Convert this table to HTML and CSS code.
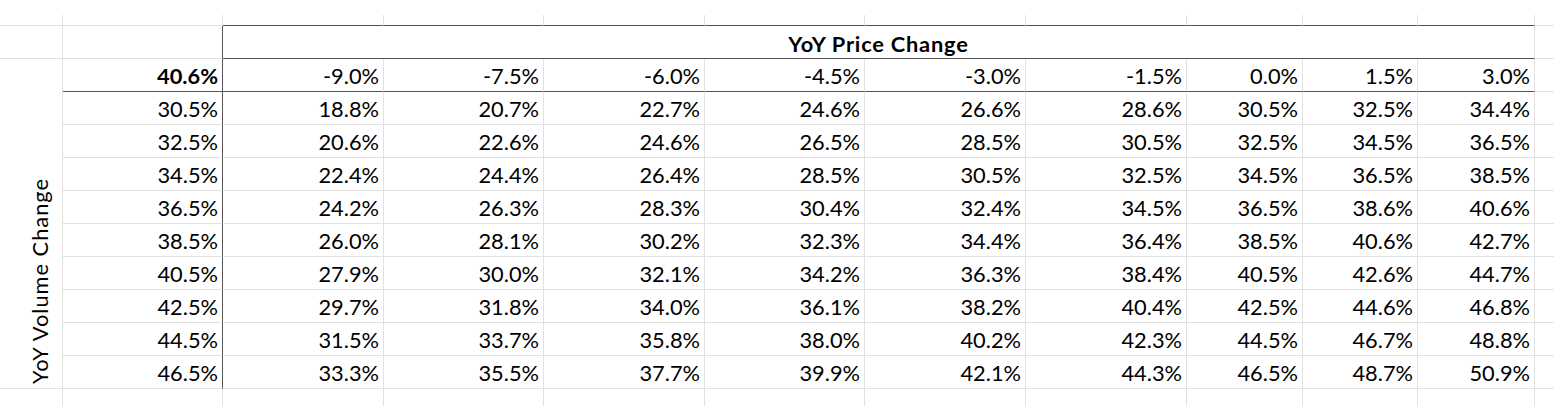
FILE: index.html
```html
<!DOCTYPE html>
<html lang="en">
<head>
<meta charset="utf-8">
<title>Sensitivity table</title>
<link rel="stylesheet" href="styles.css">
</head>
<body>
<div class="sheet">
  <!-- row 1 -->
  <div class="c"></div><div class="c"></div>
  <div class="c dkb"></div><div class="c dkb"></div><div class="c dkb"></div><div class="c dkb"></div><div class="c dkb"></div><div class="c dkb"></div><div class="c dkb"></div><div class="c dkb"></div><div class="c dkb"></div>
  <div class="c nr"></div>
  <!-- row 2 -->
  <div class="c"></div><div class="c dkr"></div>
  <div class="c dkb head">YoY Price Change</div>
  <div class="c nr"></div>
  <!-- row 3 -->
  <div class="c nb"></div>
  <div class="c dkr dkb num bold">40.6%</div>
  <div class="c dkb num">-9.0%</div><div class="c dkb num">-7.5%</div><div class="c dkb num">-6.0%</div><div class="c dkb num">-4.5%</div><div class="c dkb num">-3.0%</div><div class="c dkb num">-1.5%</div><div class="c dkb num">0.0%</div><div class="c dkb num">1.5%</div><div class="c dkb num">3.0%</div>
  <div class="c nr"></div>
  <!-- row 4 -->
  <div class="c vcell"><span class="vlabel">YoY Volume Change</span></div>
  <div class="c dkr num">30.5%</div>
  <div class="c num">18.8%</div><div class="c num">20.7%</div><div class="c num">22.7%</div><div class="c num">24.6%</div><div class="c num">26.6%</div><div class="c num">28.6%</div><div class="c num">30.5%</div><div class="c num">32.5%</div><div class="c num">34.4%</div>
  <div class="c nr"></div>
  <!-- row 5 -->
  <div class="c dkr num">32.5%</div>
  <div class="c num">20.6%</div><div class="c num">22.6%</div><div class="c num">24.6%</div><div class="c num">26.5%</div><div class="c num">28.5%</div><div class="c num">30.5%</div><div class="c num">32.5%</div><div class="c num">34.5%</div><div class="c num">36.5%</div>
  <div class="c nr"></div>
  <!-- row 6 -->
  <div class="c dkr num">34.5%</div>
  <div class="c num">22.4%</div><div class="c num">24.4%</div><div class="c num">26.4%</div><div class="c num">28.5%</div><div class="c num">30.5%</div><div class="c num">32.5%</div><div class="c num">34.5%</div><div class="c num">36.5%</div><div class="c num">38.5%</div>
  <div class="c nr"></div>
  <!-- row 7 -->
  <div class="c dkr num">36.5%</div>
  <div class="c num">24.2%</div><div class="c num">26.3%</div><div class="c num">28.3%</div><div class="c num">30.4%</div><div class="c num">32.4%</div><div class="c num">34.5%</div><div class="c num">36.5%</div><div class="c num">38.6%</div><div class="c num">40.6%</div>
  <div class="c nr"></div>
  <!-- row 8 -->
  <div class="c dkr num">38.5%</div>
  <div class="c num">26.0%</div><div class="c num">28.1%</div><div class="c num">30.2%</div><div class="c num">32.3%</div><div class="c num">34.4%</div><div class="c num">36.4%</div><div class="c num">38.5%</div><div class="c num">40.6%</div><div class="c num">42.7%</div>
  <div class="c nr"></div>
  <!-- row 9 -->
  <div class="c dkr num">40.5%</div>
  <div class="c num">27.9%</div><div class="c num">30.0%</div><div class="c num">32.1%</div><div class="c num">34.2%</div><div class="c num">36.3%</div><div class="c num">38.4%</div><div class="c num">40.5%</div><div class="c num">42.6%</div><div class="c num">44.7%</div>
  <div class="c nr"></div>
  <!-- row 10 -->
  <div class="c dkr num">42.5%</div>
  <div class="c num">29.7%</div><div class="c num">31.8%</div><div class="c num">34.0%</div><div class="c num">36.1%</div><div class="c num">38.2%</div><div class="c num">40.4%</div><div class="c num">42.5%</div><div class="c num">44.6%</div><div class="c num">46.8%</div>
  <div class="c nr"></div>
  <!-- row 11 -->
  <div class="c dkr num">44.5%</div>
  <div class="c num">31.5%</div><div class="c num">33.7%</div><div class="c num">35.8%</div><div class="c num">38.0%</div><div class="c num">40.2%</div><div class="c num">42.3%</div><div class="c num">44.5%</div><div class="c num">46.7%</div><div class="c num">48.8%</div>
  <div class="c nr"></div>
  <!-- row 12 -->
  <div class="c dkr num">46.5%</div>
  <div class="c num">33.3%</div><div class="c num">35.5%</div><div class="c num">37.7%</div><div class="c num">39.9%</div><div class="c num">42.1%</div><div class="c num">44.3%</div><div class="c num">46.5%</div><div class="c num">48.7%</div><div class="c num">50.9%</div>
  <div class="c nr"></div>
  <!-- row 13 (partial) -->
  <div class="c nb"></div><div class="c nb"></div><div class="c nb"></div><div class="c nb"></div><div class="c nb"></div><div class="c nb"></div><div class="c nb"></div><div class="c nb"></div><div class="c nb"></div><div class="c nb"></div><div class="c nb"></div><div class="c nb nr"></div>
</div>
</body>
</html>
```
FILE: styles.css
```css
html, body {
  margin: 0;
  padding: 0;
  background: #ffffff;
}

body {
  font-family: "Lato", "Open Sans", sans-serif;
  font-size: 21.8px;
  color: #000000;
}

.sheet {
  padding-top: 15px;
  display: grid;
  grid-template-columns: 63px 160px 161px 160px 161px 160px 161px 161px 116px 115px 117px 19px;
  grid-template-rows: 11px 33px 33px repeat(9, 33px) 17px;
}

.c {
  box-sizing: border-box;
  border-right: 1px solid #e1e1e1;
  border-bottom: 1px solid #e1e1e1;
  min-width: 0;
  min-height: 0;
  line-height: 26px;
  white-space: nowrap;
}

.dkb {
  border-bottom-color: #555555;
}

.dkr {
  border-right-color: #555555;
}

.nb {
  border-bottom: none;
}

.nr {
  border-right: none;
}

.num {
  display: flex;
  align-items: flex-end;
  justify-content: flex-end;
  padding: 0 4px 2px 0;
}

.bold {
  font-weight: 700;
}

.head {
  grid-column: span 9;
  display: flex;
  align-items: flex-end;
  justify-content: center;
  padding-bottom: 1px;
  font-weight: 700;
  letter-spacing: 0.8px;
}

.vcell {
  grid-row: span 9;
  display: flex;
  align-items: flex-end;
  padding: 0 0 4px 27px;
}

.vlabel {
  writing-mode: vertical-rl;
  transform: rotate(180deg);
  line-height: 26px;
  letter-spacing: 1px;
}
```
